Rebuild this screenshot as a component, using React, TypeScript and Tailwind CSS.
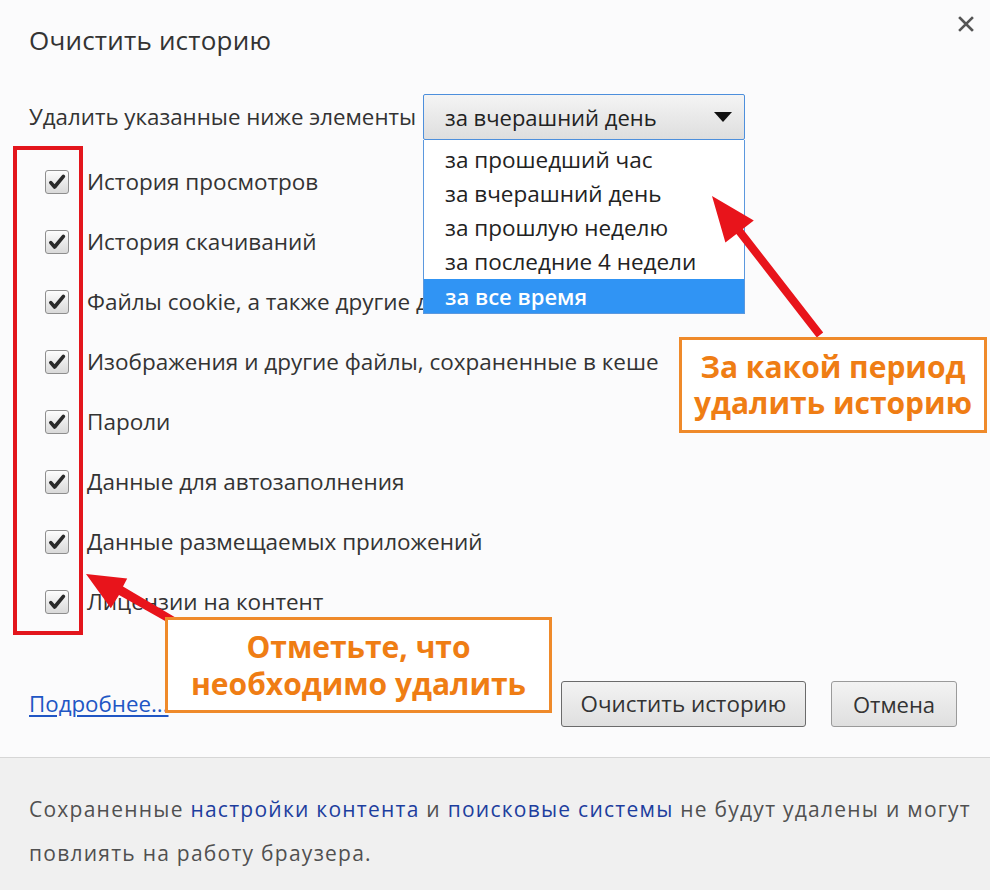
import React from "react";

const items = [
  "История просмотров",
  "История скачиваний",
  "Файлы cookie, а также другие данные сайтов и плагинов",
  "Изображения и другие файлы, сохраненные в кеше",
  "Пароли",
  "Данные для автозаполнения",
  "Данные размещаемых приложений",
  "Лицензии на контент",
];

const options = [
  "за прошедший час",
  "за вчерашний день",
  "за прошлую неделю",
  "за последние 4 недели",
];

function CheckBox() {
  return (
    <div className="w-[24px] h-[24px] shrink-0 rounded-[3px] border border-[#8e8e8e] bg-gradient-to-b from-[#fdfdfd] to-[#d9d9d9] flex items-center justify-center">
      <svg width="18" height="18" viewBox="0 0 18 18">
        <path
          d="M2.8 9.6 L6.6 14 L15.4 3.4"
          fill="none"
          stroke="#2a2a2a"
          strokeWidth="3.6"
          strokeLinecap="round"
          strokeLinejoin="round"
        />
      </svg>
    </div>
  );
}

export default function App() {
  return (
    <div
      className="relative w-[990px] h-[890px] overflow-hidden bg-[#fbfbfc] text-[#333333]"
      style={{ fontFamily: '"Open Sans", "Noto Sans", sans-serif' }}
    >
      {/* close */}
      <div className="absolute right-[16px] top-[16px] w-[16px] h-[16px]">
        <svg width="16" height="16" viewBox="0 0 16 16">
          <path d="M2 2 L14 14 M14 2 L2 14" stroke="#555" strokeWidth="2.6" strokeLinecap="square" />
        </svg>
      </div>

      <div className="pl-[29px] pr-[33px]">
        <div className="h-[94px] pt-[22px]">
          <div className="text-[26px] leading-[36px] tracking-[0.2px]">Очистить историю</div>
        </div>

        <div className="h-[46px] flex items-center">
          <div className="w-[394px] text-[22.3px] leading-[30px] whitespace-nowrap">Удалить указанные ниже элементы</div>
          <div className="relative w-[322px] h-[46px] rounded-[2px] border border-[#4d8fdc] bg-gradient-to-b from-[#f4f4f4] to-[#dedede] flex items-center pl-[21px] pr-[10px]">
            <span className="text-[22px] leading-[30px] text-[#222]">за вчерашний день</span>
            <svg className="ml-auto mr-[1px]" width="20" height="12" viewBox="0 0 20 12">
              <path d="M1 1 L19 1 L10 11 Z" fill="#111" />
            </svg>
          </div>
        </div>

        <div className="mt-[12px] flex flex-col">
          {items.map((t) => (
            <div key={t} className="h-[60px] flex items-center pl-[16px] gap-[18px]">
              <CheckBox />
              <span className="text-[22.5px] leading-[30px] whitespace-nowrap">{t}</span>
            </div>
          ))}
        </div>

        <div className="mt-[49px] h-[46px] flex items-center">
          <a className="text-[22.3px] leading-[30px] text-[#2156c4] underline underline-offset-[3px]">Подробнее...</a>
          <div className="ml-auto flex gap-[25px]">
            <button className="w-[245px] h-[46px] rounded-[3px] border border-[#6b6b6b] bg-gradient-to-b from-[#f3f3f3] to-[#dfdfdf] text-[22.4px] text-[#333]">
              Очистить историю
            </button>
            <button className="w-[126px] h-[46px] rounded-[3px] border border-[#9a9a9a] bg-gradient-to-b from-[#f3f3f3] to-[#dfdfdf] text-[22px] text-[#333]">
              Отмена
            </button>
          </div>
        </div>
      </div>

      <div className="mt-[30px] h-[200px] border-t border-[#d6d6d6] bg-[#f0f0f0] pl-[29px] pt-[29px]">
        <p className="text-[21px] leading-[44px] tracking-[1.25px] text-[#505050] whitespace-nowrap">
          Сохраненные <span className="text-[#1d3e9e]">настройки контента</span> и{" "}
          <span className="text-[#1d3e9e]">поисковые системы</span> не будут удалены и могут
          <br />
          повлиять на работу браузера.
        </p>
      </div>

      {/* dropdown list overlay */}
      <div className="absolute left-[423px] top-[140px] w-[322px] pt-[3px] border border-t-0 border-[#5b98de] bg-white flex flex-col">
        {options.map((o) => (
          <div key={o} className="h-[34px] flex items-center pl-[21px] text-[22.5px] text-[#222] whitespace-nowrap">
            {o}
          </div>
        ))}
        <div className="h-[34px] flex items-center pl-[21px] text-[22px] font-semibold text-white bg-[#3094f4]">
          за все время
        </div>
      </div>

      {/* red rectangle */}
      <div className="absolute left-[13px] top-[146px] w-[70px] h-[489px] border-[4px] border-[#e3151c]" />

      {/* arrows */}
      <svg className="absolute left-0 top-0" width="990" height="890" viewBox="0 0 990 890">
        <polygon
          points="823.2,332.5 742.8,229 753.8,220.5 712,196 725.4,242.6 736.4,234 816.8,337.5"
          fill="#e8141b"
        />
        <polygon
          points="86,574 127.2,578.5 123,586.6 178,619 174,626 119,595 110.8,608.3"
          fill="#e8141b"
        />
      </svg>

      {/* orange boxes */}
      <div className="absolute left-[679px] top-[337px] w-[308px] h-[96px] border-[3px] border-[#ef8a2a] bg-white flex flex-col items-center justify-center text-[#ef7d14] font-bold text-[30px] leading-[36px] whitespace-nowrap">
        <div>За какой период</div>
        <div>удалить историю</div>
      </div>
      <div className="absolute left-[165px] top-[617px] w-[387px] h-[96px] border-[3px] border-[#ef8a2a] bg-white flex flex-col items-center justify-center text-[#ef7d14] font-bold text-[30px] leading-[37px] whitespace-nowrap">
        <div>Отметьте, что</div>
        <div>необходимо удалить</div>
      </div>
    </div>
  );
}
